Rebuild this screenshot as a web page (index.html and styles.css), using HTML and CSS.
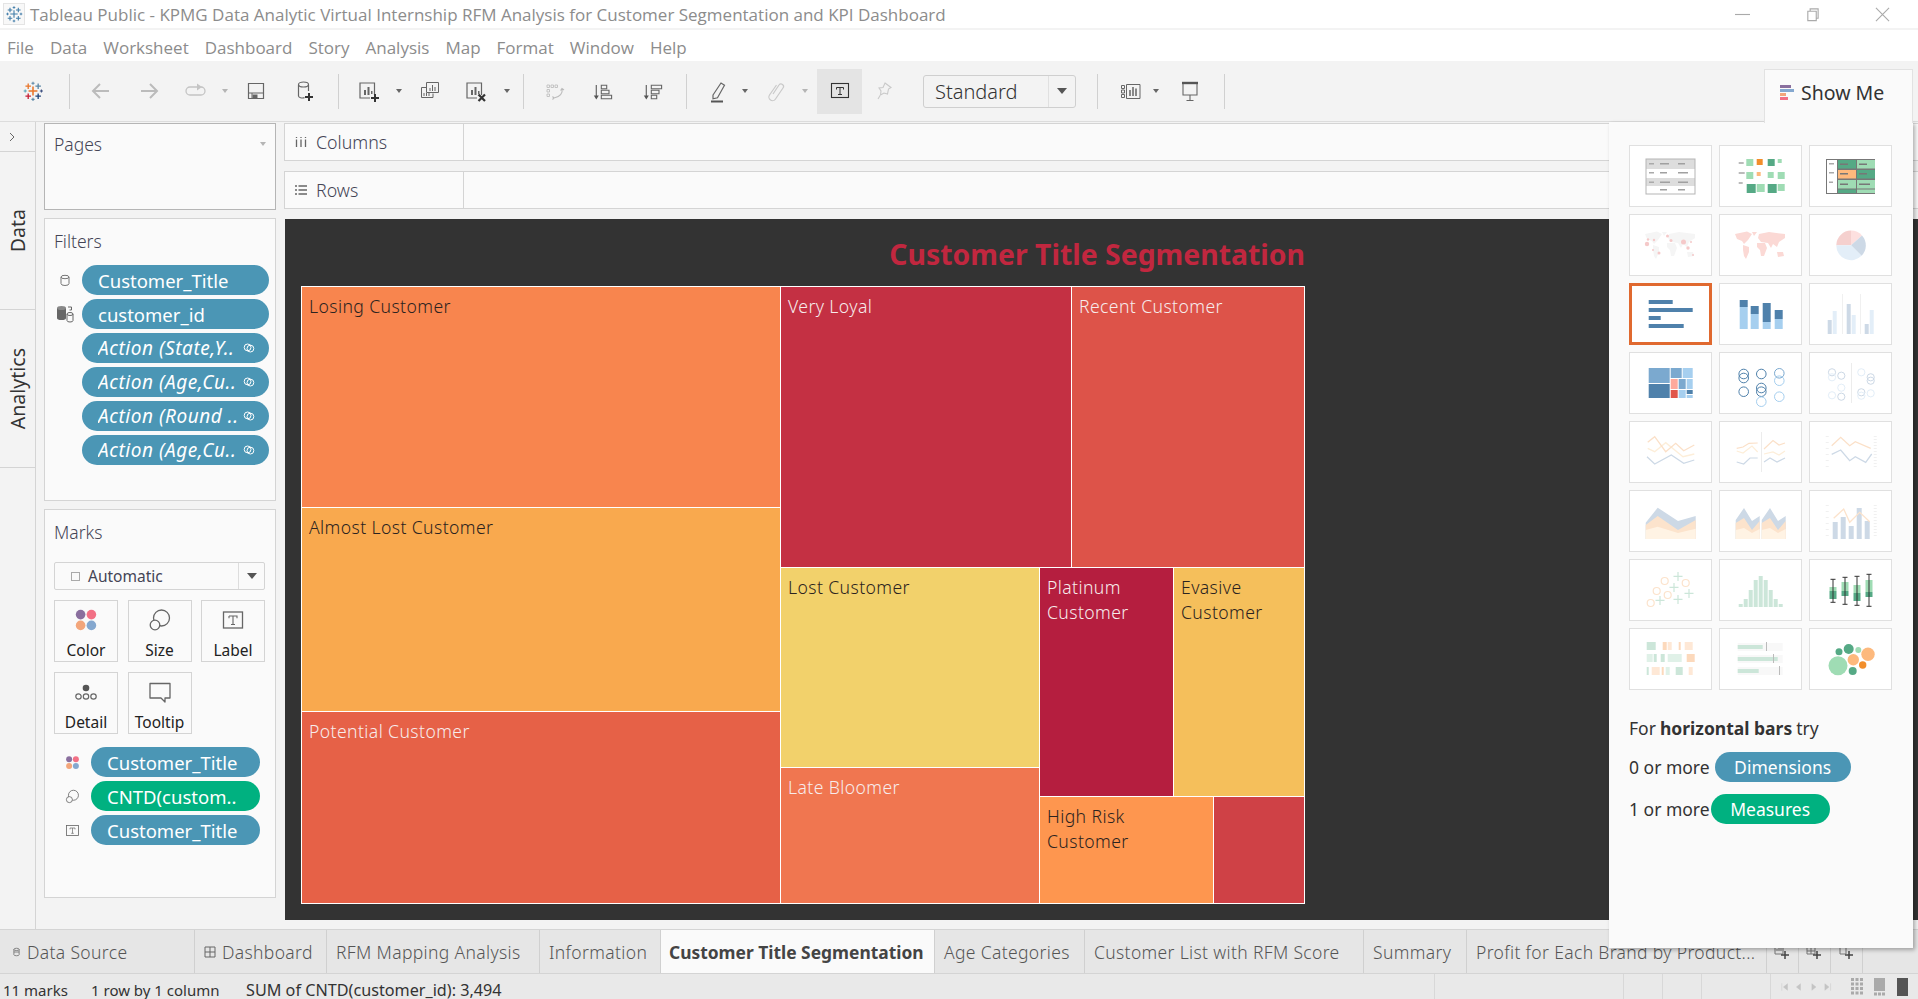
FILE: index.html
```html
<!DOCTYPE html>
<html lang="en">
<head>
<meta charset="utf-8">
<title>Tableau Public - KPMG Data Analytic Virtual Internship RFM Analysis</title>
<link rel="stylesheet" href="styles.css">
</head>
<body>
<svg class="defs" width="0" height="0">
  <defs>
    <symbol id="logo" viewBox="0 0 20 20">
      <g fill="none" stroke-width="1.1">
        <path stroke="#e8762b" stroke-width="1.3" d="M10 6.3v7.4M6.3 10h7.4"/>
        <path stroke="#e8762b" d="M6 3.7v4.6M3.7 6h4.6"/>
        <path stroke="#5b87a6" d="M14.3 3.7v4.6M12 6h4.6"/>
        <path stroke="#c72035" d="M6 12v4.6M3.7 14.3h4.6"/>
        <path stroke="#1f447a" d="M14.3 12v4.6M12 14.3h4.6"/>
        <path stroke="#5b87a6" stroke-width=".9" d="M10 2.2v2.6M8.7 3.5h2.6M10 15.7v2.6M8.7 17h2.6"/>
        <path stroke="#59a5b8" stroke-width=".9" d="M3.5 8.7v2.6M2.2 10h2.6"/>
        <path stroke="#3b4e80" stroke-width=".9" d="M17 8.7v2.6M15.7 10h2.6"/>
      </g>
    </symbol>
    <symbol id="applogo" viewBox="0 0 20 20">
      <g fill="none" stroke="#3f7ca8" stroke-width="1.1">
        <path d="M10 6.300v7.400M6.300 10h7.400M6 3.700v4.600M3.700 6h4.600M14.300 3.700v4.600M12 6h4.600M6 12v4.600M3.700 14.300h4.600M14.300 12v4.600M12 14.300h4.600"/>
        <path stroke-width=".9" d="M10 2.200v2.600M8.700 3.500h2.600M10 15.700v2.600M8.700 17h2.600M3.500 8.700v2.600M2.200 10h2.600M17 8.700v2.600M15.700 10h2.600"/>
      </g>
    </symbol>
    <symbol id="link" viewBox="0 0 12 12">
      <g fill="none" stroke="#fff" stroke-width="1"><circle cx="4.6" cy="5.4" r="3.4"/><circle cx="7.4" cy="6.6" r="3.4"/></g>
    </symbol>
    <symbol id="dots" viewBox="0 0 20 20">
      <circle cx="5.5" cy="5.5" r="4" fill="#8a6f9e"/><circle cx="14.5" cy="5.5" r="4" fill="#f27085"/>
      <circle cx="5.5" cy="14.5" r="4" fill="#f3a67b"/><circle cx="14.5" cy="14.5" r="4" fill="#85a8cf"/>
    </symbol>
    <symbol id="size" viewBox="0 0 24 24">
      <g fill="none" stroke="#666" stroke-width="1.3"><circle cx="13.5" cy="10" r="8"/><circle cx="7" cy="17" r="4.8" fill="#fafafa"/></g>
    </symbol>
    <symbol id="tbox" viewBox="0 0 24 24">
      <rect x="2.5" y="4" width="19" height="16" fill="none" stroke="#666" stroke-width="1.3"/>
      <path d="M8 8h8v2.2M8 8v2.2M12 8v8.5M10 16.5h4" fill="none" stroke="#666" stroke-width="1.1"/>
    </symbol>
    <path id="world" d="M16 20l12-2.4 5 2.4-4 6-4 4-2-3-5-2zM33 18h5l-3 4zM24 31l6 2v5l-3 7-2-3-1-6zM40 20l10-2 16 2v4l-6 4-2 5-4-3-2 4-3-5-7-1-3-4zM38 29h8l2 5-3 8h-3l-1-6-3-3zM58 38h6l1 4-6 1z"/>
    <g id="ticks" fill="#f0f0f0">
      <path d="M16.7 15h3v1h-3zM16.7 21h3v1h-3zM16.7 27h3v1h-3zM16.7 33h3v1h-3zM16.7 39h3v1h-3zM16.7 45h3v1h-3z"/>
      <path d="M64.7 15h3v1h-3zM64.7 18h3v1h-3zM64.7 21h3v1h-3zM64.7 24h3v1h-3zM64.7 27h3v1h-3zM64.7 30h3v1h-3zM64.7 33h3v1h-3zM64.7 36h3v1h-3zM64.7 39h3v1h-3zM64.7 42h3v1h-3zM64.7 45h3v1h-3z"/>
    </g>
  </defs>
</svg>

<div class="app">
  <header class="titlebar">
    <span class="appicon"><svg class="appicon-svg"><use href="#applogo"/></svg></span>
    <span class="wintitle">Tableau Public - KPMG Data Analytic Virtual Internship RFM Analysis for Customer Segmentation and KPI Dashboard</span>
    <span class="winbtns">
      <svg class="winbtn" viewBox="0 0 16 16"><path d="M0 8h16" stroke="#aaa" stroke-width="1.2"/></svg>
      <svg class="winbtn" viewBox="0 0 16 16"><path d="M3 4.5h9v10H3zM5.5 4.5V2H14v10h-2" fill="none" stroke="#aaa" stroke-width="1.2"/></svg>
      <svg class="winbtn" viewBox="0 0 16 16"><path d="M1 1l14 14M15 1L1 15" stroke="#aaa" stroke-width="1.2"/></svg>
    </span>
  </header>

  <nav class="menubar">
    <span>File</span><span>Data</span><span>Worksheet</span><span>Dashboard</span><span>Story</span><span>Analysis</span><span>Map</span><span>Format</span><span>Window</span><span>Help</span>
  </nav>

  <div class="toolbar">
    <span class="ti w56"><svg class="ic"><use href="#logo"/></svg></span>
    <i class="sep"></i>
    <span class="ti w46"><svg class="ic" viewBox="0 0 24 24"><path d="M20 12H5M11 5l-7 7 7 7" fill="none" stroke="#bbb" stroke-width="2"/></svg></span>
    <span class="ti w50"><svg class="ic" viewBox="0 0 24 24"><path d="M4 12h15M13 5l7 7-7 7" fill="none" stroke="#bbb" stroke-width="2"/></svg></span>
    <span class="ti w42"><svg class="ic" viewBox="0 0 24 24"><path d="M14 8H7a3.5 3.5 0 0 0 0 8h11a3.5 3.5 0 0 0 0-8" fill="none" stroke="#c4c4c4" stroke-width="1.3"/><path d="M14 4.500l5 3.500-5 3.500z" fill="#c4c4c4"/></svg></span>
    <span class="ti w18"><b class="caret pale"></b></span>
    <span class="ti w44"><svg class="ic" viewBox="0 0 24 24"><path d="M4.500 4.500h15v15h-15z" fill="none" stroke="#666" stroke-width="1.2"/><path d="M5 14h14M8 14v5" fill="none" stroke="#666" stroke-width="1"/><path d="M8.500 15.500h5V19h-5z" fill="#666"/></svg></span>
    <span class="ti w52"><svg class="ic" viewBox="0 0 24 24"><path d="M6.500 6v11a4 2 0 0 0 6 1.700M16.500 6v6" fill="none" stroke="#666" stroke-width="1.2"/><ellipse cx="11.500" cy="5.500" rx="5" ry="2.500" fill="none" stroke="#666" stroke-width="1.2"/><path d="M17 14v8M13 18h8" stroke="#333" stroke-width="2"/></svg></span>
    <i class="sep"></i>
    <span class="ti w44"><svg class="ic" viewBox="0 0 24 24"><path d="M17.500 16V4H3v15h10" fill="none" stroke="#666" stroke-width="1.2"/><path d="M7 11v5h2v-5zM10.500 8v8h2V8zM14 12v3h1.500v-3z" fill="#666"/><path d="M18 15v8M14 19h8" stroke="#333" stroke-width="2"/></svg></span>
    <span class="ti w16"><b class="caret"></b></span>
    <span class="ti w46"><svg class="ic" viewBox="0 0 24 24"><path d="M8.500 3.500h12v10h-12z" fill="none" stroke="#666" stroke-width="1"/><path d="M8 8.500H3.500v10H15v-4" fill="none" stroke="#666" stroke-width="1"/><path d="M12 9v3M14.500 6v6M17 8v4M6 14v3M8.500 14v3M11 14v3" stroke="#666"/></svg></span>
    <span class="ti w46"><svg class="ic" viewBox="0 0 24 24"><path d="M17.500 16V4H3v15h10" fill="none" stroke="#666" stroke-width="1.2"/><path d="M7 11v5h2v-5zM10.500 8v8h2V8zM14 12v3h1.500v-3z" fill="#666"/><path d="M14.500 15.500l6.500 6.500M21 15.500L14.500 22" stroke="#333" stroke-width="2.200"/></svg></span>
    <span class="ti w16"><b class="caret"></b></span>
    <i class="sep"></i>
    <span class="ti w46"><svg class="ic" viewBox="0 0 24 24"><path d="M4 6h2.500v2.500H4zM8 6h2.500v2.500H8zM12 6h2.500v2.500H12zM4 10.500h2.500V13H4zM4 15h2.500v2.500H4z" fill="none" stroke="#c4c4c4"/><path d="M19 10c1 4-2 8-8 9M9.500 17.500l1.500 1.500-1.500 1.500M17.500 11.500l1.500-2 2 1.500" fill="none" stroke="#bbb" stroke-width="1.100"/></svg></span>
    <span class="ti w50"><svg class="ic" viewBox="0 0 24 24"><path d="M5.300 6v11.500" stroke="#666" stroke-width="1.200"/><path d="M2.800 16.500h5L5.300 20.500z" fill="#555"/><path d="M10.300 6.300h5.400v3.400h-5.400zM10.300 11.300h7.700v3.400h-7.700zM10.300 16.300H20.600v3.400H10.300z" fill="none" stroke="#666" stroke-width="1.100"/></svg></span>
    <span class="ti w50"><svg class="ic" viewBox="0 0 24 24"><path d="M5.300 6v11.500" stroke="#666" stroke-width="1.200"/><path d="M2.800 16.500h5L5.300 20.500z" fill="#555"/><path d="M10.300 6.300H20.600v3.400H10.300zM10.300 11.300h7.700v3.400h-7.700zM10.300 16.300h5.400v3.400h-5.400z" fill="none" stroke="#666" stroke-width="1.100"/></svg></span>
    <i class="sep"></i>
    <span class="ti w44"><svg class="ic" viewBox="0 0 24 24"><path d="M8 16l8-12 3.500 2.300-7 12.500-4.500 1z" fill="none" stroke="#666" stroke-width="1.200"/><path d="M6 22.500h12" stroke="#555" stroke-width="2"/></svg></span>
    <span class="ti w12"><b class="caret"></b></span>
    <span class="ti w50"><svg class="ic" viewBox="0 0 24 24"><path d="M8 15l6-9a2.500 2.500 0 0 1 4 3l-7.500 11a3.600 3.600 0 0 1-6-4l7-10" fill="none" stroke="#c9c9c9" stroke-width="1.200" transform="translate(1 0)"/></svg></span>
    <span class="ti w8"><b class="caret pale"></b></span>
    <span class="ti tactive"><svg class="ic" viewBox="0 0 24 24"><rect x="3.500" y="4.500" width="17" height="14" fill="none" stroke="#333" stroke-width="1.100"/><path d="M8.500 8.500h7v2M8.500 8.500v2M12 8.500v7M10 15.500h4" fill="none" stroke="#333"/></svg></span>
    <span class="ti w44"><svg class="ic" viewBox="0 0 24 24"><path d="M13 4l6 4.500-2.500 1.500-1 5-3.500-1-3.500 2 .5-4-2-3 4-.5zM9 15l-3 5" fill="none" stroke="#c9c9c9" stroke-width="1.100"/></svg></span>
    <span class="select"><span class="select-label">Standard</span><span class="select-arrow"><b class="caret big"></b></span></span>
    <i class="sep gapped"></i>
    <span class="ti cards"><svg class="ic" viewBox="0 0 24 24"><path d="M2.500 6.500h3v3h-3zM2.500 11h3v3h-3zM2.500 15.500h3v3h-3zM7.500 5.500h13.500v14H7.500z" fill="none" stroke="#666"/><path d="M11 11v6M14 8v9M17 9.500V17" stroke="#666" stroke-width="1.500"/></svg></span>
    <span class="ti w8"><b class="caret"></b></span>
    <span class="ti w60"><svg class="ic" viewBox="0 0 24 24"><path d="M4 4h16" stroke="#555" stroke-width="2.400"/><path d="M5 5v11h14V5M12 16v5M8.500 21.500h7" fill="none" stroke="#666" stroke-width="1.100"/></svg></span>
    <i class="sep tight"></i>
  </div>

  <main class="workspace">
    <aside class="rail">
      <div class="rail-top"><svg class="chev" viewBox="0 0 10 10"><path d="M3 1l4 4-4 4" fill="none" stroke="#666" stroke-width="1"/></svg></div>
      <div class="rail-tab"><span class="vert">Data</span></div>
      <div class="rail-tab"><span class="vert">Analytics</span></div>
    </aside>

    <div class="side">
      <section class="card pages">
        <div class="card-head"><span>Pages</span><b class="caret pale"></b></div>
      </section>
      <section class="card filters">
        <div class="card-title">Filters</div>
        <div class="pill-row">
          <span class="slot"><svg class="cyl" viewBox="0 0 12 12"><path d="M2 3v6.500a4 2 0 0 0 8 0V3" fill="none" stroke="#777"/><ellipse cx="6" cy="3" rx="4" ry="1.700" fill="none" stroke="#777"/></svg></span>
          <span class="pill dim">Customer_Title</span>
        </div>
        <div class="pill-row">
          <span class="slot"><svg class="cyl2" viewBox="0 0 18 18"><path d="M1 3v10a4.500 2 0 0 0 9 0V3z" fill="#666"/><ellipse cx="5.500" cy="3" rx="4.500" ry="2" fill="#888"/><path d="M11 9v6.500a3 1.500 0 0 0 6 0V9" fill="#fafafa" stroke="#666"/><ellipse cx="14" cy="9" rx="3" ry="1.500" fill="none" stroke="#666"/><path d="M12 2h3.500v3h-2" fill="none" stroke="#666"/></svg></span>
          <span class="pill dim">customer_id</span>
        </div>
        <div class="pill-row"><span class="slot"></span><span class="pill dim action"><em>Action (State,Y..</em><svg class="lnk"><use href="#link"/></svg></span></div>
        <div class="pill-row"><span class="slot"></span><span class="pill dim action"><em>Action (Age,Cu..</em><svg class="lnk"><use href="#link"/></svg></span></div>
        <div class="pill-row"><span class="slot"></span><span class="pill dim action"><em>Action (Round ..</em><svg class="lnk"><use href="#link"/></svg></span></div>
        <div class="pill-row"><span class="slot"></span><span class="pill dim action"><em>Action (Age,Cu..</em><svg class="lnk"><use href="#link"/></svg></span></div>
      </section>
      <section class="card marks">
        <div class="card-title">Marks</div>
        <div class="markdrop"><span class="markdrop-label"><i class="sq"></i>Automatic</span><span class="markdrop-arrow"><b class="caret big"></b></span></div>
        <div class="markgrid">
          <div class="markbtn"><svg class="mic"><use href="#dots"/></svg><span>Color</span></div>
          <div class="markbtn"><svg class="mic"><use href="#size"/></svg><span>Size</span></div>
          <div class="markbtn"><svg class="mic"><use href="#tbox"/></svg><span>Label</span></div>
          <div class="markbtn"><svg class="mic" viewBox="0 0 24 24"><circle cx="12" cy="8" r="3.300" fill="#555"/><g fill="none" stroke="#666" stroke-width="1.200"><circle cx="4.500" cy="16.500" r="2.700"/><circle cx="12" cy="16.500" r="2.700"/><circle cx="19.500" cy="16.500" r="2.700"/></g></svg><span>Detail</span></div>
          <div class="markbtn"><svg class="mic" viewBox="0 0 24 24"><path d="M2 3.500h20V18h-5v4l-4-4H2z" fill="none" stroke="#666" stroke-width="1.300" stroke-linejoin="round"/></svg><span>Tooltip</span></div>
        </div>
        <div class="encodings">
          <div class="pill-row"><span class="slot wide"><svg class="eic"><use href="#dots"/></svg></span><span class="pill dim enc">Customer_Title</span></div>
          <div class="pill-row"><span class="slot wide"><svg class="eic"><use href="#size"/></svg></span><span class="pill mea enc">CNTD(custom..</span></div>
          <div class="pill-row"><span class="slot wide"><svg class="eic"><use href="#tbox"/></svg></span><span class="pill dim enc">Customer_Title</span></div>
        </div>
      </section>
    </div>

    <div class="stage">
      <div class="shelf"><span class="shelf-label"><svg class="shelf-ic" viewBox="0 0 12 12"><path d="M1.500 3.500V11M6 3.500V11M10.500 3.500V11M1.500 1v1M6 1v1M10.500 1v1" stroke="#666" stroke-width="1.300"/></svg>Columns</span></div>
      <div class="shelf"><span class="shelf-label"><svg class="shelf-ic" viewBox="0 0 12 12"><path d="M0 2h2M3.500 2H12M0 6h2M3.500 6H12M0 10h2M3.500 10H12" stroke="#666" stroke-width="1.400"/></svg>Rows</span></div>
      <div class="canvas">
        <div class="viz">
          <h1 class="viz-title">Customer Title Segmentation</h1>
          <div class="treemap">
            <div class="tm-col c-left">
              <div class="cell losing">Losing Customer</div>
              <div class="cell almost">Almost Lost Customer</div>
              <div class="cell potential light fill">Potential Customer</div>
            </div>
            <div class="tm-col fill">
              <div class="tm-row r-top">
                <div class="cell loyal light w-loyal">Very Loyal</div>
                <div class="cell recent light fill">Recent Customer</div>
              </div>
              <div class="tm-row fill">
                <div class="tm-col w-lost">
                  <div class="cell lost h-lost">Lost Customer</div>
                  <div class="cell late light fill">Late Bloomer</div>
                </div>
                <div class="tm-col fill">
                  <div class="tm-row h-plat">
                    <div class="cell plat light w-plat">Platinum<br>Customer</div>
                    <div class="cell evasive fill">Evasive<br>Customer</div>
                  </div>
                  <div class="tm-row fill">
                    <div class="cell risk w-risk">High Risk<br>Customer</div>
                    <div class="cell other fill"></div>
                  </div>
                </div>
              </div>
            </div>
          </div>
        </div>
      </div>
    </div>
  </main>

  <div class="tabs">
    <span class="tab t195"><svg class="tab-ic narrow" viewBox="0 0 12 12"><path d="M2.500 2.500v7a3.500 1.500 0 0 0 7 0v-7" fill="none" stroke="#666"/><ellipse cx="6" cy="2.500" rx="3.500" ry="1.500" fill="none" stroke="#666"/><path d="M2.500 6h7" stroke="#666"/></svg>Data Source</span>
    <span class="tab t132"><svg class="tab-ic" viewBox="0 0 12 12"><path d="M1 1h10v10H1zM6 1v10M1 6h10" fill="none" stroke="#666"/></svg>Dashboard</span>
    <span class="tab t213">RFM Mapping Analysis</span>
    <span class="tab t121">Information</span>
    <span class="tab t274 active">Customer Title Segmentation</span>
    <span class="tab t150">Age Categories</span>
    <span class="tab t279">Customer List with RFM Score</span>
    <span class="tab t103">Summary</span>
    <span class="tab t300">Profit for Each Brand by Product...</span>
    <span class="tab t32"><svg class="ic small" viewBox="0 0 18 18"><path d="M2 1h8v10H2zM4 8V6M6 8V3M8 8V5" fill="none" stroke="#777"/><path d="M12 8v8M8 12h8" stroke="#444" stroke-width="1.500"/></svg></span>
    <span class="tab t32"><svg class="ic small" viewBox="0 0 18 18"><path d="M2 1h8v10H2zM2 4.500h8M2 8h8M6 1v10" fill="none" stroke="#777"/><path d="M12 8v8M8 12h8" stroke="#444" stroke-width="1.500"/></svg></span>
    <span class="tab t32"><svg class="ic small" viewBox="0 0 18 18"><path d="M3 1h6v10H3z" fill="none" stroke="#777"/><path d="M12 8v8M8 12h8" stroke="#444" stroke-width="1.500"/></svg></span>
  </div>

  <footer class="status">
    <span class="st s88">11 marks</span>
    <span class="st s155">1 row by 1 column</span>
    <span class="st s1192 big-st">SUM of CNTD(customer_id): 3,494</span>
    <span class="st-cell s189"></span>
    <span class="st-cell s39"></span>
    <span class="st-cell s39"></span>
    <span class="st-cell s69"></span>
    <span class="st-nav">
      <svg class="nav" viewBox="0 0 64 12"><path d="M1 1.500v9M8 2v8L3 6zM24 2v8l-5-4zM38 2v8l5-4zM54 2v8l5-4zM61 1.500v9" fill="#c4c4c4" stroke="#c4c4c4" stroke-width=".6"/></svg>
      <svg class="view" viewBox="0 0 60 20"><path d="M0 1h3v3H0zM4.500 1h3v3h-3zM9 1h3v3H9zM0 5.500h3v3H0zM4.500 5.500h3v3h-3zM9 5.500h3v3H9zM0 10h3v3H0zM4.500 10h3v3h-3zM9 10h3v3H9zM0 14.500h3v3H0zM4.500 14.500h3v3h-3zM9 14.500h3v3H9z" fill="#aaa"/><path d="M23 1h11v13H23zM23 15.500h3v3h-3zM27 15.500h3v3h-3zM31 15.500h3v3h-3z" fill="#aaa"/><path d="M46 1h11v18H46z" fill="#555"/></svg>
    </span>
  </footer>

  <aside class="showme">
    <div class="showme-tab"><svg class="showme-ic" viewBox="0 0 14 15"><path d="M0 0h11v3H0z" fill="#8a6f9e"/><path d="M0 4h14v3H0z" fill="#85a8cf"/><path d="M0 8h6v3H0z" fill="#f3a67b"/><path d="M0 12h8v3H0z" fill="#f27085"/></svg>Show Me</div>
    <div class="thumbs">
      <div class="thumb"><svg class="th" viewBox="0 0 83 62">
        <path d="M17 14h49v10H17zM17 33h49v8H17z" fill="#ddd"/>
        <rect x="17" y="14" width="49" height="35" fill="none" stroke="#b5b5b5"/>
        <path d="M20 18h5v1.500h-5zM20 27h5v1.500h-5zM20 36.500h5V38h-5z" fill="#aaa"/>
        <path d="M31 18h9v1.500h-9zM49 18h7v1.500h-7zM31 27h7v1.500h-7zM49 27h10v1.500H49zM31 36.500h10V38H31zM49 36.500h10V38H49zM31 44h7v1.500h-7zM49 44h7v1.500h-7z" fill="#a0a0a0"/>
      </svg></div>
      <div class="thumb"><svg class="th" viewBox="0 0 83 62">
        <path d="M19.700 17h5v2h-5zM19.700 27h6v2h-6zM19.700 37h4v2h-4z" fill="#bbb"/>
        <path d="M27.300 14h7v7h-7zM58.700 14h4v4h-4zM27.300 27h7v7h-7zM48.700 27h6v6h-6zM58.700 27h7v7h-7zM37.700 39h8v8h-8zM58.700 39h7v7h-7z" fill="#9fdcb4"/>
        <path d="M37.700 14h6v6h-6z" fill="#f28e2b"/><path d="M37.700 27h4v4h-4z" fill="#fdb97d"/>
        <path d="M48.700 14h7v7h-7zM27.700 39h9v9h-9zM48.700 39h9v9h-9z" fill="#55a985"/>
      </svg></div>
      <div class="thumb"><svg class="th" viewBox="0 0 83 62">
        <rect x="17" y="14" width="49" height="35" fill="#777"/><rect x="18" y="15" width="10" height="33" fill="#fff"/>
        <path d="M20 18h5v1.500h-5zM20 27h5v1.500h-5zM20 36.500h4V38h-4z" fill="#aaa"/>
        <path d="M29 15h18v8.500H29zM48 25h18v8.500H48zM29 44.500h18V48H29z" fill="#55a985"/>
        <path d="M48 15h18v8.500H48zM29 35h18v8.500H29zM48 35h18v8.500H48zM48 44.500h18V48H48z" fill="#9fdcb4"/>
        <path d="M29 25h18v8.500H29z" fill="#fdb97d"/>
        <path d="M31 18.500h8v1.500h-8zM50 18.500h8v1.500h-8zM31 28h8v1.500h-8zM50 28h8v1.500h-8zM31 38.500h8v1.500h-8zM50 38.500h11v1.500H50z" fill="#777"/>
      </svg></div>

      <div class="thumb"><svg class="th" viewBox="0 0 83 62">
        <use href="#world" fill="#f5f5f5"/>
        <g fill="#f5c9c9"><circle cx="18" cy="30" r="2.200"/><circle cx="19" cy="25.500" r="1.200"/><circle cx="25" cy="26" r="1.200"/><circle cx="38.500" cy="22" r="1.500"/><circle cx="42" cy="26.500" r="1.500"/><circle cx="54.500" cy="28" r="2.500"/><circle cx="59" cy="34" r="1.700"/><circle cx="62" cy="28" r="1"/><circle cx="64" cy="41" r="1"/><circle cx="30" cy="39" r="1.500"/><circle cx="24" cy="36" r="1"/></g>
      </svg></div>
      <div class="thumb"><svg class="th" viewBox="0 0 83 62"><use href="#world" fill="#fbd9d5"/></svg></div>
      <div class="thumb"><svg class="th" viewBox="0 0 83 62">
        <path d="M42 31.300H27.300A14.700 14.700 0 0 1 42 16.600z" fill="#f5d0ce"/>
        <path d="M42 31.300V16.600a14.700 14.700 0 0 1 11 4.900z" fill="#fde0df"/>
        <path d="M42 31.300L53 21.500a14.700 14.700 0 0 1 -.5 20.300z" fill="#cdd9e6"/>
        <path d="M42 31.300L52.500 41.800A14.700 14.700 0 0 1 27.300 31.300z" fill="#e3eef8"/>
      </svg></div>

      <div class="thumb selected"><svg class="th" viewBox="0 0 83 62">
        <path d="M19.700 17h24v4h-24zM19.700 25h44v4h-44zM19.700 33h12v4h-12zM19.700 41h35v4h-35z" fill="#4f81ab"/>
      </svg></div>
      <div class="thumb"><svg class="th" viewBox="0 0 83 62">
        <path d="M20.700 24h8v22h-8zM31.700 31h8v15h-8zM43.700 39h8v7h-8zM55.700 36h8v10h-8z" fill="#a6cfef"/>
        <path d="M20.700 17h8v7h-8zM31.700 23h8v8h-8zM43.700 20h8v19h-8zM55.700 27h8v9h-8z" fill="#4f81ab"/>
      </svg></div>
      <div class="thumb"><svg class="th" viewBox="0 0 83 62">
        <path d="M33 11h1v40h-1zM51 11h1v40h-1z" fill="#f0f0f0"/>
        <path d="M18.700 37h4v14h-4zM37.700 21h4v30h-4zM55.700 41h4v10h-4z" fill="#cdd9e6"/>
        <path d="M23.700 28h4v23h-4zM42.700 32h4v19h-4zM60.700 27h4v24h-4z" fill="#e3eef8"/>
      </svg></div>

      <div class="thumb"><svg class="th" viewBox="0 0 83 62">
        <path d="M19.700 16h21v15h-21zM41.700 16h11v10h-11z" fill="#7ba9cf"/>
        <path d="M19.700 32h21v14h-21zM57.700 38h6v4h-6z" fill="#4f81ab"/>
        <path d="M53.700 16h10v10h-10zM57.700 27h6v10h-6zM49.700 38h7v8h-7zM57.700 43h6v3h-6z" fill="#a6cfef"/>
        <path d="M49.700 27h7v10h-7z" fill="#7ba9cf"/><path d="M41.700 27h7v10h-7z" fill="#fea99c"/><path d="M41.700 38h7v8h-7z" fill="#e0564b"/>
      </svg></div>
      <div class="thumb"><svg class="th" viewBox="0 0 83 62"><g fill="none" stroke-width="1">
        <g stroke="#4f81ab"><circle cx="24.700" cy="22" r="4.800"/><circle cx="24.700" cy="26" r="4.800"/><circle cx="24.700" cy="39.700" r="4.800"/><circle cx="42.300" cy="22" r="4.800"/><circle cx="42.300" cy="36" r="4.800"/><circle cx="42.300" cy="39.700" r="4.800"/></g>
        <g stroke="#a6cfef"><circle cx="42.300" cy="49.700" r="4.800"/><circle cx="60.300" cy="28.700" r="4.800"/><circle cx="60.300" cy="44.700" r="4.800"/></g>
        <circle cx="60.300" cy="21.300" r="4.800" stroke="#7ba9cf"/>
      </g></svg></div>
      <div class="thumb"><svg class="th" viewBox="0 0 83 62">
        <path d="M42 11h1v40h-1z" fill="#ececec"/>
        <g fill="none" stroke-width="1"><g stroke="#cdd9e6"><circle cx="23" cy="20.300" r="3.600"/><circle cx="32.300" cy="23.700" r="3.600"/><circle cx="32.300" cy="44.700" r="3.600"/><circle cx="61.700" cy="25.300" r="3.600"/><circle cx="61.700" cy="28.700" r="3.600"/><circle cx="52.300" cy="40.300" r="3.600"/></g>
        <g stroke="#e3eef8"><circle cx="23" cy="25.300" r="3.600"/><circle cx="32.300" cy="35.700" r="3.600"/><circle cx="23" cy="43.300" r="3.600"/><circle cx="52.300" cy="20.300" r="3.600"/><circle cx="52.300" cy="43.700" r="3.600"/><circle cx="61.700" cy="41.300" r="3.600"/></g></g>
      </svg></div>

      <div class="thumb"><svg class="th" viewBox="0 0 83 62"><g fill="none" stroke-width="1.300">
        <path d="M18.700 27.300l7 3.400 11-9 17.300 14 11.300-2.700" stroke="#fdeed9"/>
        <path d="M18.700 21.300l7-5.600 11 15 10-8.400 8 7.400L65.300 24" stroke="#fbe0c8"/>
        <path d="M18 35.700l7.700 7.300L42.300 34l12.400 8.300L65.300 39" stroke="#cdd9e6"/>
      </g></svg></div>
      <div class="thumb"><svg class="th" viewBox="0 0 83 62">
        <path d="M42 11h1v40h-1z" fill="#ececec"/>
        <g fill="none" stroke-width="1.200">
          <path d="M17.700 27.300L24 26l6-3.700 8.700-.3M45 28l9-8.500 6 4.500 6-2" stroke="#fbe0c8"/>
          <path d="M17.700 30l6.300 2 9-7 5.700 6M45 33l9-2 6 3 6-4" stroke="#fdeed9"/>
          <path d="M17.700 41l7 2 6.300-6 7.700 0M45 41l6-4 7 4 8-4" stroke="#cdd9e6"/>
        </g>
      </svg></div>
      <div class="thumb"><svg class="th" viewBox="0 0 83 62">
        <use href="#ticks"/>
        <g fill="none" stroke-width="1.300">
          <path d="M22.700 24.700l9-8.400 9 8.400 5.600-4 15.400 6.600" stroke="#fbe0c8"/>
          <path d="M22.700 33.300l9-4.300 9 10.700 5.600-4 10.400 5.600 6-8.300" stroke="#cdd9e6"/>
        </g>
      </svg></div>

      <div class="thumb"><svg class="th" viewBox="0 0 83 62">
        <path d="M16.700 49V32.700L28.700 17.700 49 31l17.700-5v23z" fill="#cdd9e6"/>
        <path d="M16.700 49V35L28.700 26 49 40l17.700-10v19z" fill="#fce3cc"/>
        <path d="M16.700 49v-9l12-3.300L49 43l17.700-4.300V49z" fill="#fff3e4"/>
      </svg></div>
      <div class="thumb"><svg class="th" viewBox="0 0 83 62">
        <path d="M16.700 49V30L25 18l8 13 7.700-5v23zM42.700 49V30L51 18l8 13 7.700-5v23z" fill="#cdd9e6"/>
        <path d="M16.700 49V33L25 28l8 12 7.700-9v18zM42.700 49V33L51 28l8 12 7.700-9v18z" fill="#fce3cc"/>
        <path d="M16.700 49v-9L25 38l8 5 7.700-4v10zM42.700 49v-9L51 38l8 5 7.700-4v10z" fill="#fff3e4"/>
      </svg></div>
      <div class="thumb"><svg class="th" viewBox="0 0 83 62">
        <use href="#ticks"/>
        <path d="M23.700 32h5v17h-5zM31.700 27h5v22h-5zM39.700 36h5v13h-5zM47.700 18h5v31h-5zM55.700 31h5v18h-5z" fill="#cdd9e6"/>
        <path d="M24.700 28.300l10-9.300 6 13.300 10-10 10 9.400" fill="none" stroke="#fce3cc" stroke-width="1.300"/>
      </svg></div>

      <div class="thumb"><svg class="th" viewBox="0 0 83 62">
        <g fill="none" stroke="#fce3cc" stroke-width="1.200"><circle cx="35.700" cy="22" r="3.500"/><circle cx="56.700" cy="24" r="3.500"/><circle cx="27.700" cy="32" r="3.500"/><circle cx="38.700" cy="36" r="3.500"/><circle cx="21.700" cy="44" r="3.500"/></g>
        <path d="M49 13v9M44.500 17.300h9M45 24v9M40.500 28.300h9M60 30v9M55.500 34.300h9M31 37v9M26.500 41.300h9M49 36v9M44.500 40.300h9" stroke="#cce6d9" stroke-width="1.200"/>
      </svg></div>
      <div class="thumb"><svg class="th" viewBox="0 0 83 62">
        <path d="M19.700 45h4v3h-4zM24.700 40h4v8h-4zM29.700 31h4v17h-4zM34.700 21h4v27h-4zM39.700 17h4v31h-4zM44.700 21h4v27h-4zM49.700 31h4v17h-4zM54.700 40h4v8h-4zM59.700 45h4v3h-4z" fill="#cce6d9"/>
      </svg></div>
      <div class="thumb"><svg class="th" viewBox="0 0 83 62">
        <path d="M20.500 28h7v4h-7zM32.500 23h7v9h-7zM44.500 26h7v8h-7zM56.500 21h7v12h-7z" fill="#9fdcb4"/>
        <path d="M20.500 32h7v8h-7zM32.500 32h7v5h-7zM44.500 34h7v8h-7zM56.500 33h7v5h-7z" fill="#55a985"/>
        <path d="M24 20.300v23M21.500 20.300h5M21.500 43.300h5M36 18.300v27M33.500 18.300h5M33.500 45.300h5M48 17.300v29M45.500 17.300h5M45.500 46.300h5M60 15.300v32M57.500 15.300h5M57.500 47.300h5" stroke="#333" fill="none"/>
      </svg></div>

      <div class="thumb"><svg class="th" viewBox="0 0 83 62">
        <path d="M17.700 14h9v8h-9zM24.700 26h3v8h-3zM31.700 26h4v8h-4zM17.700 39h2v8h-2zM46.700 39h7v8h-7z" fill="#cce6d9"/>
        <path d="M33.700 14h4v8h-4zM49.700 14h2v8h-2zM57.700 26h8v8h-8zM32.700 39h2v8h-2z" fill="#fcd9bc"/>
        <path d="M38.700 14h4v8h-4zM55.700 14h8v8h-8zM22.700 39h8v8h-8zM59.700 39h4v8h-4z" fill="#fee8d6"/>
        <path d="M17.700 26h6v8h-6zM38.700 26h14v8h-14zM36.700 39h4v8h-4z" fill="#e0f1e8"/>
      </svg></div>
      <div class="thumb"><svg class="th" viewBox="0 0 83 62">
        <path d="M18.700 15h45v8h-45zM18.700 27h45v8h-45zM18.700 39h45v8h-45z" fill="#f8f8f8"/>
        <path d="M18.700 17h25v4h-25zM18.700 29h40v4h-40zM18.700 41h21v4h-21z" fill="#cce6d9"/>
        <path d="M47 14h1v9h-1zM54 26h1v9h-1zM60 38h1v9h-1z" fill="#bbb"/>
      </svg></div>
      <div class="thumb"><svg class="th" viewBox="0 0 83 62">
        <circle cx="29" cy="37.700" r="9.500" fill="#9fdcb4"/><circle cx="30" cy="23.700" r="3.500" fill="#55a985"/><circle cx="39.700" cy="21" r="5" fill="#55a985"/><circle cx="49.300" cy="22" r="3" fill="#9fdcb4"/><circle cx="59" cy="26.300" r="6.700" fill="#fdb97d"/><circle cx="44.300" cy="31.700" r="5.700" fill="#fdb97d"/><circle cx="53.700" cy="37" r="3.700" fill="#f28e2b"/><circle cx="43.700" cy="43" r="4" fill="#55a985"/>
      </svg></div>
    </div>
    <div class="hints">
      <p class="hint first">For <strong>horizontal bars</strong> try</p>
      <p class="hint"><span class="hint-label">0 or more</span><span class="hint-pill dim pill-d">Dimensions</span></p>
      <p class="hint"><span class="hint-label">1 or more</span><span class="hint-pill mea pill-m">Measures</span></p>
    </div>
  </aside>
</div>
```

FILE: styles.css
```css
* { box-sizing: border-box; }
html, body { margin: 0; height: 100%; overflow: hidden; }
body { font-family: "Noto Sans", "Open Sans", sans-serif; font-weight: 300; color: #333; background: #f3f3f3; }
.defs { position: absolute; }
.app { position: relative; display: flex; flex-direction: column; width: 1918px; height: 999px; }

.titlebar { display: flex; align-items: center; height: 28px; margin-bottom: 2px; background: #fff; padding-left: 3px; }
.appicon { display: flex; width: 22px; height: 22px; border: 1px solid #e4e4e4; background: #f8f8f8; }
.appicon-svg { width: 20px; height: 20px; }
.wintitle { margin-left: 5px; font-family: "Open Sans", sans-serif; font-size: 17px; font-weight: 400; color: #8c8c8c; white-space: nowrap; }
.winbtns { display: flex; margin-left: auto; gap: 55px; padding-right: 28px; }
.winbtn { width: 15px; height: 15px; }

.menubar { display: flex; gap: 16px; align-items: center; height: 31px; padding: 3px 0 0 7px; background: #fff; font-family: "Open Sans", sans-serif; font-size: 17px; font-weight: 400; color: #8c8c8c; }

.toolbar { display: flex; align-items: center; height: 61px; padding-left: 5px; background: #f3f3f3; border-bottom: 1px solid #dcdcdc; }
.ti { display: flex; align-items: center; justify-content: center; flex: none; height: 45px; }
.ic { width: 24px; height: 24px; }
.ic.small { width: 18px; height: 18px; }
.w8 { width: 8px; } .w12 { width: 12px; } .w16 { width: 16px; } .w18 { width: 18px; }
.w42 { width: 42px; } .w44 { width: 44px; } .w46 { width: 46px; } .w50 { width: 50px; }
.w52 { width: 52px; } .w56 { width: 56px; } .w60 { width: 60px; }
.cards { width: 42px; margin-left: 4px; }
.tactive { width: 45px; margin-left: 8px; background: #e4e4e4; }
.sep { flex: none; width: 1px; height: 35px; margin: 0 8px; background: #d0d0d0; }
.sep.gapped { margin-left: 21px; }
.sep.tight { margin-left: 4px; }
.caret { display: block; width: 0; height: 0; border: 3.5px solid transparent; border-top: 4px solid #666; border-bottom: 0; }
.caret.pale { border-top-color: #b5b5b5; }
.caret.big { border-width: 5px; border-top-width: 6px; border-bottom: 0; border-top-color: #555; }

.select { display: flex; flex: none; width: 153px; height: 33px; margin-left: 17px; background: transparent; border: 1px solid #cfcfcf; border-radius: 3px; font-size: 20px; color: #333; }
.select-label { flex: 1; padding-left: 11px; line-height: 32px; }
.select-arrow { display: flex; align-items: center; justify-content: center; width: 27px; border-left: 1px solid #e0e0e0; }

.workspace { display: flex; flex: 1; min-height: 0; }
.rail { flex: none; width: 36px; padding-top: 1px; background: #f3f3f3; border-right: 1px solid #d4d4d4; }
.rail-top { display: flex; align-items: center; height: 29px; padding-left: 7px; border-bottom: 1px solid #d4d4d4; }
.chev { width: 10px; height: 10px; }
.rail-tab { display: flex; align-items: center; justify-content: center; height: 158px; border-bottom: 1px solid #d4d4d4; }
.vert { writing-mode: vertical-rl; transform: rotate(180deg); font-size: 19.500px; font-weight: 400; color: #333; }

.side { flex: none; display: flex; flex-direction: column; gap: 8px; width: 232px; margin: 1px 8px 0; }
.card { background: #fafafa; border: 1px solid #d4d4d4; }
.pages { height: 87px; border-color: #b5b5b5; }
.filters { height: 283px; }
.marks { height: 389px; }
.card-head { display: flex; align-items: center; justify-content: space-between; height: 40px; padding: 0 9px; font-size: 17.500px; color: #445; }
.card-title { height: 46px; padding: 10px 9px 0; font-size: 17.500px; color: #445; line-height: 24px; }

.pill-row { display: flex; align-items: center; height: 30px; margin-bottom: 4px; }
.slot { display: flex; flex: none; align-items: center; justify-content: center; width: 37px; padding-left: 2px; }
.slot.wide { width: 46px; padding-left: 9px; }
.cyl { width: 12px; height: 12px; }
.cyl2 { width: 18px; height: 18px; }
.pill { display: flex; align-items: center; width: 187px; height: 30px; padding-left: 16px; border-radius: 15px; color: #fff; font-size: 18.500px; font-weight: 400; white-space: nowrap; }
.pill em { flex: 1; overflow: hidden; font-size: 19px; letter-spacing: .55px; }
.action { padding-right: 14px; }
.lnk { flex: none; width: 12px; height: 12px; margin-left: 2px; }
.dim { background: #4b96b5; }
.mea { background: #00b180; }
.enc { width: 169px; }

.markdrop { display: flex; width: 211px; height: 28px; margin: 6px 0 0 9px; background: #fafafa; border: 1px solid #d4d4d4; border-radius: 2px; font-size: 15.500px; font-weight: 400; color: #445; }
.markdrop-label { display: flex; flex: 1; align-items: center; gap: 8px; padding-left: 16px; }
.sq { width: 9px; height: 9px; border: 1px solid #aaa; }
.markdrop-arrow { display: flex; align-items: center; justify-content: center; width: 26px; border-left: 1px solid #ddd; }
.markgrid { display: grid; grid-template-columns: 64px 64px 64px; grid-auto-rows: 62px; gap: 10px 9.500px; margin: 10px 0 0 9px; }
.markbtn { display: flex; flex-direction: column; align-items: center; padding-top: 7px; border: 1px solid #d4d4d4; font-size: 15.500px; font-weight: 400; color: #222; line-height: 22px; }
.mic { flex: none; width: 24px; height: 24px; margin-bottom: 7px; }
.encodings { margin-top: 13px; }
.eic { width: 15px; height: 15px; }

.stage { display: flex; flex: 1; flex-direction: column; min-width: 0; padding-top: 1px; }
.shelf { flex: none; height: 38px; margin-bottom: 10px; background: #fafafa; border: 1px solid #d4d4d4; border-right: 0; }
.shelf-label { display: flex; align-items: center; gap: 9px; width: 179px; height: 100%; padding-left: 10px; border-right: 1px solid #d4d4d4; font-size: 17.800px; color: #445; }
.shelf-ic { width: 12px; height: 12px; }
.canvas { flex: 1; margin: 0 0 9px 1px; background: #333; }
.viz { display: flex; flex-direction: column; width: 1020px; padding-left: 16px; }
.viz-title { display: flex; align-items: center; justify-content: flex-end; height: 67px; margin: 0; padding-top: 3px; font-size: 28.400px; font-weight: 700; color: #c1273f; white-space: nowrap; }

.treemap { display: flex; gap: 1px; width: 1004px; height: 618px; padding: 1px; background: #fff; }
.tm-col { display: flex; flex-direction: column; gap: 1px; min-width: 0; min-height: 0; }
.tm-row { display: flex; gap: 1px; min-width: 0; min-height: 0; }
.fill { flex: 1; }
.c-left { width: 478px; }
.r-top { height: 280px; }
.w-loyal { width: 290px; }
.w-lost { width: 258px; }
.h-lost { height: 199px; }
.h-plat { height: 228px; }
.w-plat { width: 133px; }
.w-risk { width: 173px; }
.cell { padding: 7px 7px; font-size: 17.600px; line-height: 25px; letter-spacing: .4px; color: #2b2320; }
.cell.light { color: #f7ecec; }
.losing { height: 220px; background: #f8854e; }
.almost { height: 203px; background: #f9a94e; }
.potential { background: #e66147; }
.loyal { background: #c43043; }
.recent { background: #dd5349; }
.lost { background: #f2d16b; }
.late { background: #f07650; }
.plat { background: #b51e3f; }
.evasive { background: #f5bf5b; }
.risk { background: #fe964f; }
.other { background: #cf4146; }

.tabs { display: flex; flex: none; height: 45px; background: #e6e6e6; border-top: 1px solid #d4d4d4; border-bottom: 1px solid #d4d4d4; }
.tab { display: flex; align-items: center; flex: none; gap: 6px; padding-left: 9px; border-right: 1px solid #d0d0d0; font-size: 17.500px; letter-spacing: .35px; color: #555; white-space: nowrap; overflow: hidden; }
.tab.active { background: #fafafa; font-weight: 700; font-size: 17.400px; letter-spacing: 0; color: #444; padding-left: 8px; }
.tab-ic { width: 12px; height: 12px; }
.tab-ic.narrow { width: 9px; margin-left: 3px; }
.t195 { width: 195px; } .t132 { width: 132px; } .t213 { width: 213px; } .t121 { width: 121px; }
.t274 { width: 274px; } .t150 { width: 150px; } .t279 { width: 279px; } .t103 { width: 103px; }
.t300 { width: 300px; } .t32 { width: 32px; padding-left: 6px; }

.status { display: flex; flex: none; align-items: stretch; height: 25px; background: #e9e9e9; font-size: 15px; font-weight: 400; color: #333; }
.st { display: flex; align-items: center; flex: none; padding: 6px 0 0 3px; white-space: nowrap; }
.s88 { width: 88px; } .s155 { width: 155px; } .s1192 { width: 1192px; border-right: 1px solid #d8d8d8; }
.big-st { font-size: 16.200px; }
.st-cell { flex: none; border-right: 1px solid #d8d8d8; }
.s189 { width: 189px; } .s39 { width: 39px; } .s69 { width: 69px; }
.st-nav { display: flex; flex: 1; align-items: center; gap: 18px; padding-left: 10px; }
.nav { width: 52px; height: 10px; }
.view { width: 60px; height: 20px; }

.showme { position: absolute; top: 122px; left: 1609px; width: 304px; height: 826px; padding: 23px 0 0 20px; background: #fafafa; box-shadow: 2px 2px 4px rgba(0, 0, 0, .3); }
.showme-tab { position: absolute; top: -53px; right: 0; display: flex; align-items: center; gap: 7px; width: 149px; height: 54px; padding: 0 0 8px 15px; background: #fafafa; border: 1px solid #e2e2e2; border-bottom: 0; font-size: 19.500px; font-weight: 400; color: #333; }
.showme-ic { width: 14px; height: 15px; }
.thumbs { display: grid; grid-template-columns: repeat(3, 83px); grid-auto-rows: 62px; gap: 7px; }
.thumb { background: #fff; outline: 1px solid #e0e0e0; outline-offset: -1px; }
.thumb.selected { outline: 3px solid #e0692f; outline-offset: -3px; }
.th { display: block; width: 83px; height: 62px; }
.hints { margin-top: 23px; font-size: 17.500px; font-weight: 400; color: #333; }
.hint { display: flex; align-items: center; gap: 4px; height: 30px; margin: 0 0 12px; }
.hint.first { margin-bottom: 9px; }
.hint strong { font-weight: 700; }
.hint-pill { display: flex; align-items: center; justify-content: center; height: 30px; border-radius: 15px; color: #fff; }
.pill-d { width: 136px; margin-left: 1px; }
.pill-m { width: 119px; margin-left: -3px; }
```
